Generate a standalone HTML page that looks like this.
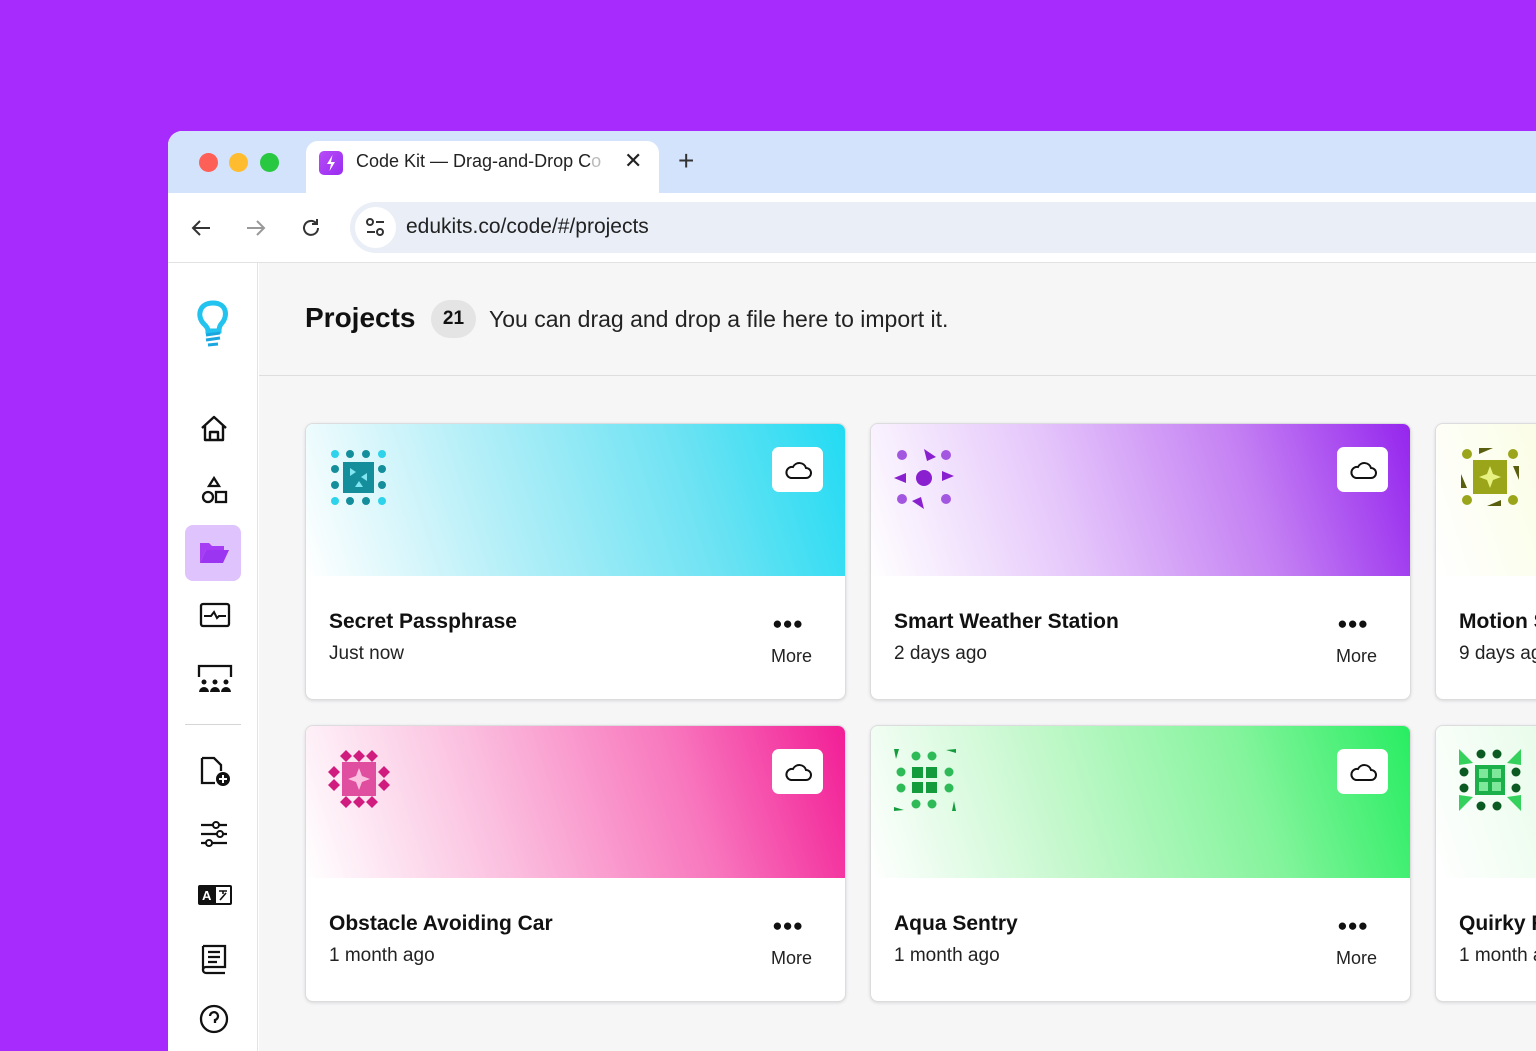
<!DOCTYPE html>
<html><head><meta charset="utf-8"><style>
*{margin:0;padding:0;box-sizing:border-box}
body{width:1536px;height:1025px;overflow:hidden;background:#a82bfe;font-family:"Liberation Sans",sans-serif;position:relative}
.abs{position:absolute}
.win{left:168px;top:131px;width:1400px;height:920px;background:#fff;border-radius:14px 0 0 0;overflow:hidden}
.tabbar{left:0;top:0;width:100%;height:62px;background:#d4e3fc}
.dot{width:19px;height:19px;border-radius:50%;top:22px}
.tab{left:138px;top:10px;width:353px;height:52px;background:#fff;border-radius:12px 12px 0 0}
.toolbar{left:0;top:62px;width:100%;height:70px;background:#fff;border-bottom:1px solid #e2e2e2}
.omni{left:182px;top:9px;width:1300px;height:51px;background:#e9eef7;border-radius:26px}
.side{left:0;top:132px;width:90px;height:800px;background:#fff;border-right:1px solid #e3e3e3}
.main{left:91px;top:132px;width:1320px;height:800px;background:#f6f6f7}
.hdr{left:0;top:0;width:100%;height:113px;border-bottom:1px solid #dedede}
.card{width:541px;height:277px;background:#fff;border-radius:8px;border:1px solid #dcdcdc;box-shadow:0 1px 3px rgba(0,0,0,.12);overflow:hidden}
.grad{left:0;top:0;width:100%;height:152px}
.cloud{right:22px;top:23px;width:51px;height:45px;background:#fff;border-radius:7px;display:flex;align-items:center;justify-content:center}
.title{left:23px;top:186px;font-size:21px;font-weight:bold;color:#111}
.sub{left:23px;top:219px;font-size:19px;color:#222}
.more{right:33px;top:222px;font-size:18px;color:#222}
.dots{right:42px;top:190px;font-size:17px;font-weight:bold;letter-spacing:0px;color:#111}
</style></head><body>
<div class="abs win">
 <div class="abs tabbar">
  <div class="abs dot" style="left:31px;background:#fe5f57"></div>
  <div class="abs dot" style="left:61px;background:#febc2e"></div>
  <div class="abs dot" style="left:92px;background:#28c840"></div>
  <div class="abs tab">
   <div class="abs" style="left:13px;top:10px;width:24px;height:24px;border-radius:5px;background:linear-gradient(135deg,#b74cf7,#9a2cf0)"><svg width="24" height="24"><path d="M13.5 4L8 13h4l-1.5 7L16 11h-4z" fill="#fff"/></svg></div>
   <div class="abs" style="left:50px;top:10px;font-size:18px;color:#222;white-space:nowrap;width:252px;overflow:hidden">Code Kit — Drag-and-Drop C<span style="color:#bbb">o</span></div>
   <div class="abs" style="left:318px;top:7px;font-size:22px;color:#222">✕</div>
  </div>
  <div class="abs" style="left:510px;top:14px;font-size:28px;color:#333">+</div>
 </div>
 <div class="abs toolbar">
  <svg class="abs" style="left:22px;top:24px" width="22" height="22"><path d="M20 11H3M10 4L3 11l7 7" stroke="#333" stroke-width="2" fill="none"/></svg>
  <svg class="abs" style="left:77px;top:24px" width="22" height="22"><path d="M2 11h17M12 4l7 7-7 7" stroke="#999" stroke-width="2" fill="none"/></svg>
  <svg class="abs" style="left:132px;top:24px" width="22" height="22"><path d="M18 11a7 7 0 1 1-2-5" stroke="#333" stroke-width="2" fill="none"/><path d="M17 2v5h-5" stroke="#333" stroke-width="2" fill="none"/></svg>
  <div class="abs omni">
   <div class="abs" style="left:5px;top:5px;width:41px;height:41px;border-radius:50%;background:#fff"><svg width="41" height="41"><circle cx="15" cy="15" r="3" stroke="#333" stroke-width="2" fill="none"/><path d="M21 15h8M12 25h8" stroke="#333" stroke-width="2"/><circle cx="25" cy="25" r="3" stroke="#333" stroke-width="2" fill="none"/></svg></div>
   <div class="abs" style="left:56px;top:13px;font-size:21px;color:#222">edukits.co/code/#/projects</div>
  </div>
 </div>
 <div class="abs side">
  <svg class="abs" style="left:28px;top:36px" width="36" height="54"><path d="M7 24C1 17 3 4 17 4c14 0 15 13 9 20-3 3-3 6-3 8H12c0-3-2-5-5-8z" stroke="#22c3ee" stroke-width="5" fill="none"/><path d="M10 36l14-2M10 41l14-2M12 46l10-1" stroke="#1aa7e0" stroke-width="3"/></svg>
  <svg class="abs" style="left:31px;top:151px" width="30" height="30"><path d="M3 14L15 3l12 11M6 12v14h18V12M11 26v-8h8v8" stroke="#111" stroke-width="2.4" fill="none" stroke-linejoin="round"/></svg>
  <svg class="abs" style="left:31px;top:212px" width="30" height="32"><path d="M15 3l5 8H10z" stroke="#111" stroke-width="2.3" fill="none"/><circle cx="9" cy="22" r="5" stroke="#111" stroke-width="2.3" fill="none"/><rect x="17" y="17" width="10" height="10" stroke="#111" stroke-width="2.3" fill="none"/></svg>
  <div class="abs" style="left:17px;top:262px;width:56px;height:56px;border-radius:8px;background:#dfc3fc"></div>
  <svg class="abs" style="left:30px;top:276px" width="32" height="28"><path d="M2 4h9l3 3h12v4H8L2 24z" fill="#a63df5"/><path d="M8 11h23l-6 13H2z" fill="#9b35f2"/></svg>
  <svg class="abs" style="left:31px;top:338px" width="32" height="28"><rect x="2" y="3" width="28" height="22" rx="2" stroke="#111" stroke-width="2.3" fill="none"/><path d="M5 15h7l3-4 3 6 2-2h7" stroke="#111" stroke-width="2" fill="none"/></svg>
  <svg class="abs" style="left:29px;top:400px" width="36" height="32"><path d="M2 14V3h32v11" stroke="#111" stroke-width="2.3" fill="none"/><circle cx="7" cy="19" r="2.5" fill="#111"/><circle cx="18" cy="19" r="2.5" fill="#111"/><circle cx="29" cy="19" r="2.5" fill="#111"/><path d="M2 29a5 5 0 0 1 10 0zM13 29a5 5 0 0 1 10 0zM24 29a5 5 0 0 1 10 0z" fill="#111"/></svg>
  <div class="abs" style="left:17px;top:461px;width:56px;height:1px;background:#d5d5d5"></div>
  <svg class="abs" style="left:31px;top:492px" width="34" height="34"><path d="M3 3h12l7 7v6M3 3v25h13" stroke="#111" stroke-width="2.3" fill="none"/><circle cx="24" cy="24" r="7" fill="#111"/><path d="M24 20v8M20 24h8" stroke="#fff" stroke-width="2"/></svg>
  <svg class="abs" style="left:31px;top:556px" width="30" height="30"><path d="M2 6h26M2 15h26M2 24h26" stroke="#111" stroke-width="2.2"/><circle cx="17" cy="6" r="3" fill="#fff" stroke="#111" stroke-width="2"/><circle cx="21" cy="15" r="3" fill="#fff" stroke="#111" stroke-width="2"/><circle cx="10" cy="24" r="3" fill="#fff" stroke="#111" stroke-width="2"/></svg>
  <svg class="abs" style="left:29px;top:620px" width="36" height="24"><rect x="1" y="2" width="34" height="20" rx="2" fill="#111"/><rect x="19" y="4" width="14" height="16" fill="#fff"/><text x="5" y="17" font-family="Liberation Sans" font-weight="bold" font-size="13" fill="#fff">A</text><path d="M22 8h8M26 8v3M23 17l6-7" stroke="#111" stroke-width="1.6" fill="none"/></svg>
  <svg class="abs" style="left:32px;top:680px" width="28" height="32"><path d="M3 3h22v21H6a3 3 0 0 0 0 6h19" stroke="#111" stroke-width="2.3" fill="none"/><path d="M3 3v24M8 9h12M8 14h12M8 19h9" stroke="#111" stroke-width="2.2"/></svg>
  <svg class="abs" style="left:30px;top:740px" width="32" height="32"><circle cx="16" cy="16" r="13" stroke="#111" stroke-width="2.3" fill="none"/><path d="M12 13a4 4 0 1 1 5 4v3" stroke="#111" stroke-width="2.3" fill="none"/></svg>
 </div>
 <div class="abs main">
  <div class="abs hdr">
   <div class="abs" style="left:46px;top:39px;font-size:28px;font-weight:bold;color:#111">Projects</div>
   <div class="abs" style="left:172px;top:37px;width:45px;height:38px;border-radius:19px;background:#e4e4e4;font-size:19px;font-weight:bold;text-align:center;line-height:38px;color:#111">21</div>
   <div class="abs" style="left:230px;top:43px;font-size:23px;color:#222">You can drag and drop a file here to import it.</div>
  </div>
 </div>
</div>

<!-- cards -->
<div class="abs card" style="left:305px;top:423px">
 <div class="abs grad" style="background:linear-gradient(72deg,#fff 0%,#b5eff8 35%,#6fe3f3 70%,#22dbf3 100%)"></div>
 <svg class="abs" style="left:24px;top:25px" width="58" height="58"><g fill="#2dd3ea"><circle cx="5" cy="5" r="4"/><circle cx="52" cy="5" r="4"/><circle cx="5" cy="52" r="4"/><circle cx="52" cy="52" r="4"/></g><g fill="#158e9c"><circle cx="20" cy="5" r="4"/><circle cx="36" cy="5" r="4"/><circle cx="20" cy="52" r="4"/><circle cx="36" cy="52" r="4"/><circle cx="5" cy="20" r="4"/><circle cx="5" cy="36" r="4"/><circle cx="52" cy="20" r="4"/><circle cx="52" cy="36" r="4"/><rect x="13" y="13" width="31" height="31"/></g><path d="M20 19l6 4-6 4zM37 24l-6 4 6 4zM25 38l4-6 4 6z" fill="#7fe6f2"/></svg>
 <div class="abs cloud"><svg width="30" height="22"><path d="M8 19h15a5 5 0 0 0 0-10 7 7 0 0 0-13-1 5.5 5.5 0 0 0-2 11z" stroke="#111" stroke-width="2" fill="none"/></svg></div>
 <div class="abs title">Secret Passphrase</div><div class="abs sub">Just now</div>
 <div class="abs dots">●●●</div><div class="abs more">More</div>
</div>
<div class="abs card" style="left:870px;top:423px">
 <div class="abs grad" style="background:linear-gradient(72deg,#fff 0%,#e6c8fb 35%,#c47ff3 70%,#9526ee 100%)"></div>
 <svg class="abs" style="left:23px;top:25px" width="60" height="60"><g fill="#a356e0"><circle cx="8" cy="6" r="5"/><circle cx="52" cy="6" r="5"/><circle cx="8" cy="50" r="5"/><circle cx="52" cy="50" r="5"/></g><circle cx="30" cy="29" r="8" fill="#8a1fd0"/><path d="M30 0l3 12 9-4zM0 29l12-5v10zM30 60l-3-12-9 4zM60 27l-12-5v10z" fill="#8a1fd0"/></svg>
 <div class="abs cloud"><svg width="30" height="22"><path d="M8 19h15a5 5 0 0 0 0-10 7 7 0 0 0-13-1 5.5 5.5 0 0 0-2 11z" stroke="#111" stroke-width="2" fill="none"/></svg></div>
 <div class="abs title">Smart Weather Station</div><div class="abs sub">2 days ago</div>
 <div class="abs dots">●●●</div><div class="abs more">More</div>
</div>
<div class="abs card" style="left:1435px;top:423px">
 <div class="abs grad" style="background:linear-gradient(72deg,#fff 0%,#f8fcd8 40%,#eef78a 100%)"></div>
 <svg class="abs" style="left:23px;top:22px" width="62" height="62"><g fill="#9aa51a"><circle cx="8" cy="8" r="5"/><circle cx="54" cy="8" r="5"/><circle cx="8" cy="54" r="5"/><circle cx="54" cy="54" r="5"/><rect x="14" y="14" width="34" height="34"/></g><path d="M20 2h14l-14 6zM60 20v14l-6-14zM42 60H28l14-6zM2 42V28l6 14z" fill="#5a5f0f"/><path d="M31 20l3 8 8 3-8 3-3 8-3-8-8-3 8-3z" fill="#e8f280"/></svg>
 <div class="abs title">Motion Sensor</div><div class="abs sub">9 days ago</div>
</div>

<div class="abs card" style="left:305px;top:725px">
 <div class="abs grad" style="background:linear-gradient(72deg,#fff 0%,#fbbfdf 35%,#f876bd 70%,#f21e96 100%)"></div>
 <svg class="abs" style="left:22px;top:22px" width="62" height="62"><g fill="#d01c7e"><path d="M18 2l6 6-6 6-6-6zM31 2l6 6-6 6-6-6zM44 2l6 6-6 6-6-6zM18 48l6 6-6 6-6-6zM31 48l6 6-6 6-6-6zM44 48l6 6-6 6-6-6zM6 18l6 6-6 6-6-6zM6 31l6 6-6 6-6-6zM56 18l6 6-6 6-6-6zM56 31l6 6-6 6-6-6z"/></g><rect x="14" y="14" width="34" height="34" fill="#e04ea0"/><path d="M31 20l3 8 8 3-8 3-3 8-3-8-8-3 8-3z" fill="#fbc1e0"/></svg>
 <div class="abs cloud"><svg width="30" height="22"><path d="M8 19h15a5 5 0 0 0 0-10 7 7 0 0 0-13-1 5.5 5.5 0 0 0-2 11z" stroke="#111" stroke-width="2" fill="none"/></svg></div>
 <div class="abs title">Obstacle Avoiding Car</div><div class="abs sub">1 month ago</div>
 <div class="abs dots">●●●</div><div class="abs more">More</div>
</div>
<div class="abs card" style="left:870px;top:725px">
 <div class="abs grad" style="background:linear-gradient(72deg,#fff 0%,#c4f8cc 35%,#84f49c 70%,#28ed62 100%)"></div>
 <svg class="abs" style="left:23px;top:23px" width="62" height="62"><g fill="#2fba58"><circle cx="22" cy="7" r="4.5"/><circle cx="38" cy="7" r="4.5"/><circle cx="22" cy="55" r="4.5"/><circle cx="38" cy="55" r="4.5"/><circle cx="7" cy="23" r="4.5"/><circle cx="7" cy="39" r="4.5"/><circle cx="55" cy="23" r="4.5"/><circle cx="55" cy="39" r="4.5"/></g><g fill="#149c3c"><rect x="18" y="18" width="11" height="11"/><rect x="32" y="18" width="11" height="11"/><rect x="18" y="33" width="11" height="11"/><rect x="32" y="33" width="11" height="11"/><path d="M0 0h5l-3 10zM62 0v4l-10-3zM0 62v-4l10 3zM62 62h-4l2-10z"/></g></svg>
 <div class="abs cloud"><svg width="30" height="22"><path d="M8 19h15a5 5 0 0 0 0-10 7 7 0 0 0-13-1 5.5 5.5 0 0 0-2 11z" stroke="#111" stroke-width="2" fill="none"/></svg></div>
 <div class="abs title">Aqua Sentry</div><div class="abs sub">1 month ago</div>
 <div class="abs dots">●●●</div><div class="abs more">More</div>
</div>
<div class="abs card" style="left:1435px;top:725px">
 <div class="abs grad" style="background:linear-gradient(72deg,#fff 0%,#dcfadf 40%,#b3f4b8 100%)"></div>
 <svg class="abs" style="left:23px;top:23px" width="62" height="62"><path d="M0 0l14 14L0 16zM62 0L48 14l14 2zM0 62l14-14L0 46zM62 62L48 48l14-2z" fill="#34d25c"/><g fill="#0b5a22"><circle cx="22" cy="5" r="4.5"/><circle cx="38" cy="5" r="4.5"/><circle cx="22" cy="57" r="4.5"/><circle cx="38" cy="57" r="4.5"/><circle cx="5" cy="23" r="4.5"/><circle cx="5" cy="39" r="4.5"/><circle cx="57" cy="23" r="4.5"/><circle cx="57" cy="39" r="4.5"/></g><rect x="16" y="16" width="30" height="30" fill="#1cb04a"/><path d="M20 20h9v9h-9zM33 20h9v9h-9zM20 33h9v9h-9zM33 33h9v9h-9z" fill="#7ee89a"/></svg>
 <div class="abs title">Quirky Robot</div><div class="abs sub">1 month ago</div>
</div>
</body></html>
